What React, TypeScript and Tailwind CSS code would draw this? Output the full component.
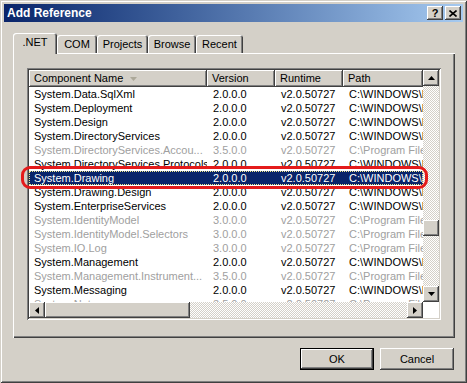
import React from 'react'

type Row = { name: string; version: string; runtime: string; path: string; dim?: boolean; selected?: boolean }

const WIN = 'C:\\WINDOWS\\Microsoft.NET\\Framework'
const PF = 'C:\\Program Files\\Reference Assemblies'

const rows: Row[] = [
  { name: 'System.Data.SqlXml', version: '2.0.0.0', runtime: 'v2.0.50727', path: WIN },
  { name: 'System.Deployment', version: '2.0.0.0', runtime: 'v2.0.50727', path: WIN },
  { name: 'System.Design', version: '2.0.0.0', runtime: 'v2.0.50727', path: WIN },
  { name: 'System.DirectoryServices', version: '2.0.0.0', runtime: 'v2.0.50727', path: WIN },
  { name: 'System.DirectoryServices.Accou...', version: '3.5.0.0', runtime: 'v2.0.50727', path: PF, dim: true },
  { name: 'System.DirectoryServices.Protocols', version: '2.0.0.0', runtime: 'v2.0.50727', path: WIN },
  { name: 'System.Drawing', version: '2.0.0.0', runtime: 'v2.0.50727', path: WIN, selected: true },
  { name: 'System.Drawing.Design', version: '2.0.0.0', runtime: 'v2.0.50727', path: WIN },
  { name: 'System.EnterpriseServices', version: '2.0.0.0', runtime: 'v2.0.50727', path: WIN },
  { name: 'System.IdentityModel', version: '3.0.0.0', runtime: 'v2.0.50727', path: PF, dim: true },
  { name: 'System.IdentityModel.Selectors', version: '3.0.0.0', runtime: 'v2.0.50727', path: PF, dim: true },
  { name: 'System.IO.Log', version: '3.0.0.0', runtime: 'v2.0.50727', path: PF, dim: true },
  { name: 'System.Management', version: '2.0.0.0', runtime: 'v2.0.50727', path: WIN },
  { name: 'System.Management.Instrument...', version: '3.5.0.0', runtime: 'v2.0.50727', path: PF, dim: true },
  { name: 'System.Messaging', version: '2.0.0.0', runtime: 'v2.0.50727', path: WIN },
  { name: 'System.Net', version: '3.5.0.0', runtime: 'v2.0.50727', path: PF, dim: true },
]

const raised =
  'bg-[#d4d0c8] shadow-[inset_-1px_-1px_#404040,inset_1px_1px_#fff,inset_-2px_-2px_#808080]'
const checker =
  'bg-[repeating-conic-gradient(#d4d0c8_0_25%,#fff_0_50%)] bg-[length:2px_2px]'

function Arrow({ dir }: { dir: 'up' | 'down' | 'left' | 'right' }) {
  const pts = {
    up: '0,4 3.5,0 7,4',
    down: '0,0 7,0 3.5,4',
    left: '4,0 4,7 0,3.5',
    right: '0,0 4,3.5 0,7',
  }[dir]
  const vertical = dir === 'up' || dir === 'down'
  return (
    <svg width={vertical ? 7 : 4} height={vertical ? 4 : 7} viewBox={vertical ? '0 0 7 4' : '0 0 4 7'}>
      <polygon points={pts} fill="#000" />
    </svg>
  )
}

function Tab({ label, w, active }: { label: string; w: string; active?: boolean }) {
  return (
    <div
      className={`${w} flex items-center justify-center rounded-t-[3px] bg-[#d4d0c8] shadow-[inset_1px_1px_#fff,inset_-1px_0_#404040,inset_-2px_0_#808080] ${
        active ? 'h-[21px] -mb-px relative z-10 pb-[2px]' : 'h-[18px]'
      }`}
    >
      {label}
    </div>
  )
}

export default function App() {
  return (
    <div className="relative w-[467px] h-[383px] bg-[#d4d0c8] p-[4px] flex flex-col text-[11px] text-black font-['Liberation_Sans',Arial,sans-serif] shadow-[inset_1px_1px_#d4d0c8,inset_-1px_-1px_#404040,inset_2px_2px_#fff,inset_-2px_-2px_#808080]">
      {/* title bar */}
      <div className="h-[18px] flex items-center justify-between bg-linear-to-r from-[#0a246a] to-[#a6caf0] pl-[3px] pr-[2px]">
        <span className="text-white font-bold text-[12px]">Add Reference</span>
        <div className="flex gap-[2px]">
          <div className={`${raised} w-[16px] h-[14px] flex items-center justify-center font-bold text-[11px] leading-none`}>?</div>
          <div className={`${raised} w-[16px] h-[14px] flex items-center justify-center`}>
            <svg width="8" height="7" viewBox="0 0 8 7">
              <path d="M0.5 0.5 L7.5 6.5 M7.5 0.5 L0.5 6.5" stroke="#000" strokeWidth="1.6" />
            </svg>
          </div>
        </div>
      </div>

      {/* body */}
      <div className="flex-1 flex flex-col pl-[9px] pr-[8px]">
        <div className="mt-[11px] h-[20px] flex items-end">
          <Tab label=".NET" w="w-[44px]" active />
          <Tab label="COM" w="w-[40px]" />
          <Tab label="Projects" w="w-[51px]" />
          <Tab label="Browse" w="w-[48px]" />
          <Tab label="Recent" w="w-[47px]" />
        </div>

        {/* panel */}
        <div className="h-[285px] pt-[15px] px-[14px] pb-[18px] shadow-[inset_1px_1px_#fff,inset_-1px_-1px_#404040,inset_-2px_-2px_#808080]">
          <div className="h-[252px] p-[2px] bg-white flex flex-col shadow-[inset_1px_1px_#808080,inset_-1px_-1px_#fff,inset_2px_2px_#404040,inset_-2px_-2px_#d4d0c8]">
            <div className="flex h-[232px]">
              {/* list content */}
              <div className="flex-1 flex flex-col overflow-hidden">
                <div className="h-[17px] flex shrink-0">
                  <div className={`${raised} w-[178px] flex items-center pl-[5px] gap-[7px]`}>
                    <span>Component Name</span>
                    <svg width="7" height="4" viewBox="0 0 7 4">
                      <polygon points="0,0 7,0 3.5,4" fill="#aca899" />
                    </svg>
                  </div>
                  <div className={`${raised} w-[68px] flex items-center pl-[5px]`}>Version</div>
                  <div className={`${raised} w-[68px] flex items-center pl-[5px]`}>Runtime</div>
                  <div className={`${raised} flex-1 flex items-center pl-[5px]`}>Path</div>
                </div>
                <div className="flex-1 overflow-hidden">
                  {rows.map((r) => (
                    <div
                      key={r.name}
                      className={`h-[14px] flex items-center whitespace-nowrap ${
                        r.selected
                          ? 'bg-[#0a246a] text-white outline-1 outline-dotted outline-[#f0e68c] -outline-offset-1'
                          : r.dim
                          ? 'text-[#a0a0a0]'
                          : 'text-black'
                      }`}
                    >
                      <div className="w-[178px] pl-[5px] overflow-hidden">{r.name}</div>
                      <div className="w-[68px] pl-[6px] overflow-hidden">{r.version}</div>
                      <div className="w-[68px] pl-[6px] overflow-hidden">{r.runtime}</div>
                      <div className="flex-1 pl-[6px] overflow-hidden">{r.path}</div>
                    </div>
                  ))}
                </div>
              </div>
              {/* vertical scrollbar */}
              <div className="w-[16px] flex flex-col">
                <div className={`${raised} h-[16px] flex items-center justify-center`}>
                  <Arrow dir="up" />
                </div>
                <div className={`${checker} h-[134px]`} />
                <div className={`${raised} h-[16px]`} />
                <div className={`${checker} flex-1`} />
                <div className={`${raised} h-[16px] flex items-center justify-center`}>
                  <Arrow dir="down" />
                </div>
              </div>
            </div>
            {/* horizontal scrollbar */}
            <div className="flex h-[16px]">
              <div className={`${raised} w-[16px] flex items-center justify-center`}>
                <Arrow dir="left" />
              </div>
              <div className={`${raised} w-[145px]`} />
              <div className={`${checker} flex-1`} />
              <div className={`${raised} w-[16px] flex items-center justify-center`}>
                <Arrow dir="right" />
              </div>
              <div className="w-[16px] bg-white" />
            </div>
          </div>
        </div>

        {/* buttons */}
        <div className="mt-[10px] flex justify-end gap-[6px] pr-[1px]">
          <div className="w-[74px] h-[22px] border border-black">
            <div className={`${raised} h-full flex items-center justify-center`}>OK</div>
          </div>
          <div className={`${raised} w-[74px] h-[22px] flex items-center justify-center`}>
            Cancel
          </div>
        </div>
      </div>

      {/* red annotation */}
      <div className="absolute left-[21px] top-[166px] w-[407px] h-[23px] border-[3px] border-[#e41b1b] rounded-[9px] pointer-events-none" />
    </div>
  )
}
